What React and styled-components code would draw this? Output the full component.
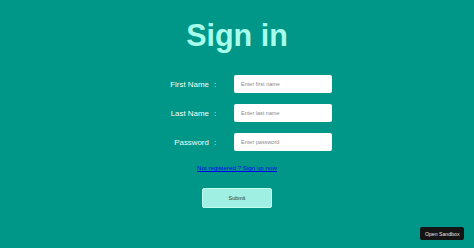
import React from 'react'
import styled, { createGlobalStyle } from 'styled-components'

const GlobalStyle = createGlobalStyle`
  html, body {
    margin: 0;
    padding: 0;
    background: #009688;
  }
  body {
    font-family: "Liberation Sans", Arial, sans-serif;
  }
`

const Page = styled.div`
  height: 248px;
  background: #009688;
  display: flex;
  flex-direction: column;
  align-items: center;
  position: relative;
  overflow: hidden;
`

const Title = styled.h1`
  margin: 18px 0 0;
  font-size: 30.5px;
  font-weight: bold;
  line-height: 34px;
  color: #a7ffeb;
`

const Form = styled.form`
  margin-top: 23px;
  display: flex;
  flex-direction: column;
  align-items: center;
  gap: 11px;
`

const Row = styled.div`
  display: flex;
  align-items: center;
  height: 18px;
`

const Label = styled.label`
  width: 67px;
  text-align: right;
  font-size: 7.9px;
  color: #f0fffb;
`

const Colon = styled.span`
  margin-left: 5px;
  margin-right: 18px;
  font-size: 7.9px;
  color: #f0fffb;
`

const Input = styled.input`
  box-sizing: border-box;
  width: 98px;
  height: 18px;
  border: none;
  border-radius: 2px;
  background: #fff;
  padding: 0 7px;
  font-family: inherit;
  font-size: 5.5px;
  outline: none;

  &::placeholder {
    color: #8a8a8a;
  }
`

const SignUp = styled.a`
  margin-top: 2px;
  font-size: 6.2px;
  line-height: 7px;
  color: #0000ee;
  text-decoration: underline;
  cursor: pointer;
`

const Submit = styled.button`
  margin-top: 6px;
  width: 70px;
  height: 20px;
  border: 1px solid #c4fbf1;
  border-radius: 2px;
  background: #9ff0e3;
  color: #2a3b38;
  font-family: inherit;
  font-size: 5.4px;
  cursor: pointer;
`

const SandboxButton = styled.div`
  position: absolute;
  right: 10px;
  bottom: 8px;
  background: #141414;
  color: #e6e6e6;
  font-size: 5.2px;
  line-height: 6px;
  padding: 3.5px 4.5px;
  border-radius: 2px;
`

export default function App() {
  return (
    <>
      <GlobalStyle />
      <Page>
        <Title>Sign in</Title>
        <Form onSubmit={(e) => e.preventDefault()}>
          <Row>
            <Label>First Name</Label>
            <Colon>:</Colon>
            <Input type="text" placeholder="Enter first name" />
          </Row>
          <Row>
            <Label>Last Name</Label>
            <Colon>:</Colon>
            <Input type="text" placeholder="Enter last name" />
          </Row>
          <Row>
            <Label>Password</Label>
            <Colon>:</Colon>
            <Input type="password" placeholder="Enter password" />
          </Row>
          <SignUp>Not registered ? Sign up now</SignUp>
          <Submit type="submit">Submit</Submit>
        </Form>
        <SandboxButton>Open Sandbox</SandboxButton>
      </Page>
    </>
  )
}
